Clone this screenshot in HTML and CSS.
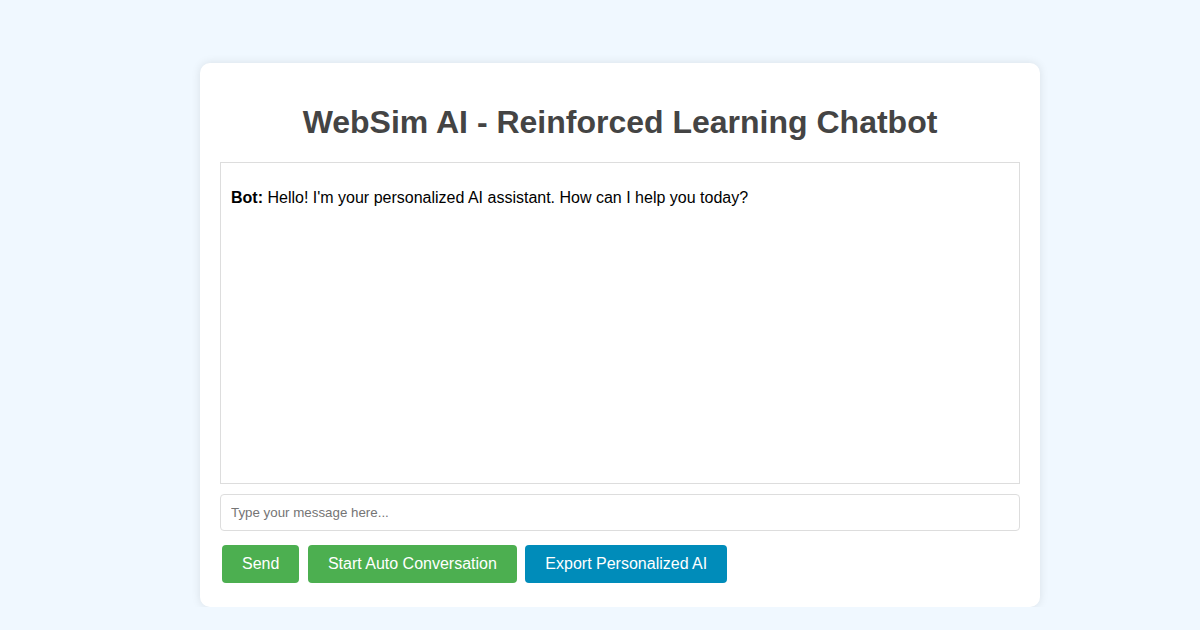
FILE: index.html
```html
<!DOCTYPE html>
<html lang="en">
<head>
  <meta charset="UTF-8" />
  <meta name="viewport" content="width=device-width, initial-scale=1" />
  <title>WebSim AI - Reinforced Learning Chatbot</title>
  <link rel="stylesheet" href="styles.css">
</head>
<body>
  <div class="container">
    <h1>WebSim AI - Reinforced Learning Chatbot</h1>
    <div id="chatBox" class="chat-box">
      <p class="message"><strong>Bot:</strong> Hello! I'm your personalized AI assistant. How can I help you today?</p>
    </div>
    <input type="text" id="userInput" placeholder="Type your message here..." />
    <div class="controls">
      <button class="btn">Send</button>
      <button class="btn">Start Auto Conversation</button>
      <button class="btn export">Export Personalized AI</button>
    </div>
  </div>
</body>
</html>
```

FILE: styles.css
```css
body {
  font-family: "Liberation Sans", Arial, sans-serif;
  background: #f0f8ff;
  margin: 0;
  padding: 63px 0 0 40px;
}
.container {
  width: 800px;
  margin: 0 auto;
  padding: 20px 20px 24px;
  background: white;
  border-radius: 10px;
  box-shadow: 0 0 10px rgba(0,0,0,0.1);
}
h1 {
  text-align: center;
  color: #444;
  font-size: 32px;
  margin: 21px 0;
}
.chat-box {
  height: 300px;
  padding: 10px;
  border: 1px solid #ddd;
  overflow-y: auto;
}
.message {
  margin: 16px 0;
  font-size: 16px;
  color: #000;
}
#userInput {
  display: block;
  box-sizing: border-box;
  width: 100%;
  height: 37px;
  margin-top: 10px;
  padding: 10px;
  font-family: inherit;
  font-size: 13.33px;
  border: 1px solid #ddd;
  border-radius: 4px;
}
.controls {
  display: flex;
  gap: 8.5px;
  margin-top: 14px;
  padding-left: 2px;
}
.btn {
  padding: 10px 20px;
  border: none;
  border-radius: 4px;
  background: #4caf50;
  color: white;
  font-family: inherit;
  font-size: 16px;
  line-height: 18px;
  cursor: pointer;
}
.btn.export {
  background: #008cba;
}
```
